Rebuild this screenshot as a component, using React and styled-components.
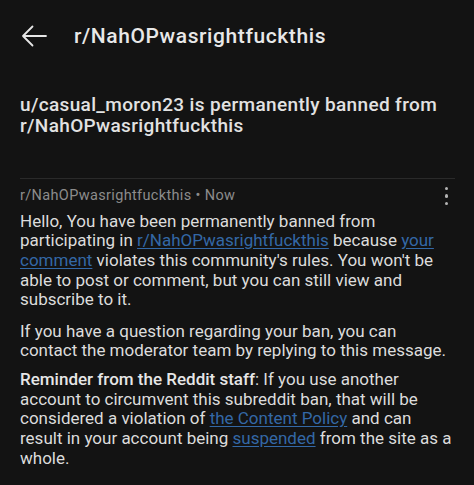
import React from "react";
import styled, { createGlobalStyle } from "styled-components";

const GlobalStyle = createGlobalStyle`
  html, body {
    margin: 0;
    background: #131313;
  }
  body {
    font-family: Roboto, "Liberation Sans", sans-serif;
    -webkit-font-smoothing: antialiased;
  }
`;

const Screen = styled.div`
  width: 474px;
  height: 485px;
  background: #131313;
  color: #dcdcdc;
  overflow: hidden;
  display: flex;
  flex-direction: column;
`;

const Header = styled.header`
  display: flex;
  align-items: center;
  height: 24px;
  padding: 24px 0 0 21px;
  gap: 27px;
`;

const BackButton = styled.button`
  display: flex;
  align-items: center;
  justify-content: center;
  width: 26px;
  height: 24px;
  padding: 0;
  border: 0;
  background: none;
  color: #e6e6e6;
`;

const Title = styled.h1`
  margin: 0;
  font-size: 21px;
  line-height: 24px;
  font-weight: 500;
  letter-spacing: 0.6px;
  color: #e8e8e8;
`;

const Heading = styled.h2`
  margin: 46px 20px 0;
  font-size: 19px;
  line-height: 21px;
  font-weight: 500;
  letter-spacing: 0.35px;
  color: #e2e2e2;
`;

const Divider = styled.hr`
  margin: 42px 19px 0 20px;
  border: 0;
  border-top: 1px solid #2a2a2a;
`;

const Message = styled.section`
  padding: 0 26px 0 20px;
`;

const MetaRow = styled.div`
  display: flex;
  align-items: center;
  justify-content: space-between;
  height: 18px;
  margin-top: 8px;
`;

const Meta = styled.span`
  font-size: 14.5px;
  line-height: 18px;
  letter-spacing: 0.35px;
  color: #8c8c8c;
`;

const More = styled.span`
  display: flex;
  flex-direction: column;
  gap: 4px;
  color: #b4b4b4;

  i {
    display: block;
    width: 3.5px;
    height: 3.5px;
    border-radius: 50%;
    background: currentColor;
  }
`;

const Paragraph = styled.p`
  margin: ${(p) => p.$gap}px -6px 0 0;
  font-size: 17px;
  line-height: 19.7px;
  color: #dcdcdc;
`;

const Link = styled.a`
  color: #3368a6;
  text-decoration: underline;
  text-underline-offset: 2px;
`;

const Strong = styled.strong`
  font-weight: 500;
  color: #e6e6e6;
`;

export default function App() {
  return (
    <>
      <GlobalStyle />
      <Screen>
        <Header>
          <BackButton aria-label="Back">
            <svg width="26" height="22" viewBox="0 0 26 22" fill="none">
              <path
                d="M25 11H2M11.5 1.5L2 11l9.5 9.5"
                stroke="currentColor"
                strokeWidth="1.8"
                strokeLinecap="round"
                strokeLinejoin="round"
              />
            </svg>
          </BackButton>
          <Title>r/NahOPwasrightfuckthis</Title>
        </Header>

        <Heading>
          u/casual_moron23 is permanently banned from r/NahOPwasrightfuckthis
        </Heading>

        <Divider />

        <Message>
          <MetaRow>
            <Meta>r/NahOPwasrightfuckthis • Now</Meta>
            <More>
              <i />
              <i />
              <i />
            </More>
          </MetaRow>

          <Paragraph $gap={6.5}>
            Hello, You have been permanently banned from participating in{" "}
            <Link href="#">r/NahOPwasrightfuckthis</Link> because{" "}
            <Link href="#">your comment</Link> violates this community's rules.
            You won't be able to post or comment, but you can still view and
            subscribe to it.
          </Paragraph>

          <Paragraph $gap={11.5}>
            If you have a question regarding your ban, you can contact the
            moderator team by replying to this message.
          </Paragraph>

          <Paragraph $gap={9}>
            <Strong>Reminder from the Reddit staff</Strong>: If you use another
            account to circumvent this subreddit ban, that will be considered a
            violation of <Link href="#">the Content Policy</Link> and can result
            in your account being <Link href="#">suspended</Link> from the site
            as a whole.
          </Paragraph>
        </Message>
      </Screen>
    </>
  );
}
